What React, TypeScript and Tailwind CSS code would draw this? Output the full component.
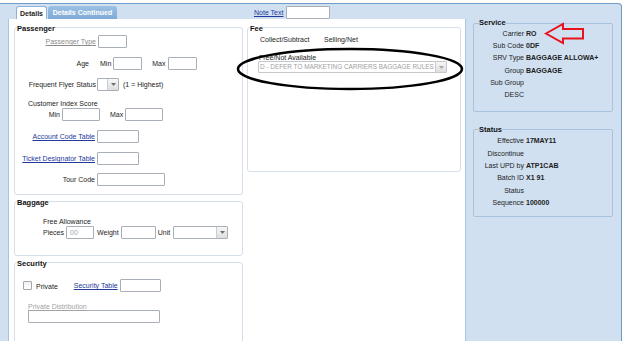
import type { ReactNode } from 'react';

// small form pieces used across the panels
function Input({ className = '', value }: { className?: string; value?: string }) {
  return (
    <div
      className={`flex h-[13px] shrink-0 items-center rounded-[1px] border border-[#a9afb7] bg-white px-[3px] text-[#a8a8a8] ${className}`}
    >
      {value}
    </div>
  );
}

function Combo({ className = '', text, disabled }: { className?: string; text?: string; disabled?: boolean }) {
  return (
    <div
      className={`flex shrink-0 overflow-hidden rounded-[1px] border bg-white ${
        disabled ? 'h-[12px] border-[#c4c8cc]' : 'h-[13px] border-[#a9afb7]'
      } ${className}`}
    >
      <div className="flex min-w-0 flex-1 items-center overflow-hidden whitespace-nowrap pl-[1px] text-[6.4px] text-[#a0a0a0]">
        {text}
      </div>
      <div className="flex w-[11px] shrink-0 items-center justify-center border-l border-[#c9ccd0] bg-gradient-to-b from-[#f7f7f7] to-[#dedede]">
        <svg width="5" height="3" viewBox="0 0 5 3">
          <path d="M0 0h5L2.5 3z" fill={disabled ? '#a9a9a9' : '#707070'} />
        </svg>
      </div>
    </div>
  );
}

function Link({ children }: { children: ReactNode }) {
  return <span className="text-[#23399c] underline">{children}</span>;
}

function Legend({ children, className = '' }: { children: ReactNode; className?: string }) {
  return <legend className={`text-[7.5px] font-bold text-[#111] ${className}`}>{children}</legend>;
}

function InfoRow({ label, value }: { label: string; value?: string }) {
  return (
    <div className="flex h-[12.3px] items-center">
      <span className="w-[50px] text-right">{label}</span>
      {value && <span className="ml-[2px] font-bold">{value}</span>}
    </div>
  );
}

export default function App() {
  return (
    <div className="relative h-[341px] w-[624px] overflow-hidden bg-white font-['Liberation_Sans',Arial,sans-serif] text-[7px] leading-none text-[#1c1c1c]">
      <div className="mt-[3px] mr-[2px] flex h-[338px] rounded-tr-[4px] border-t border-r border-[#6f9bc8] bg-[#d0e0f1]">
        {/* Left column: tabs + form */}
        <div className="flex w-[466px] flex-col">
          <div className="flex h-[18px] pl-[16px]">
            <div className="flex self-end">
              <div className="flex h-[13px] w-[31px] items-center justify-center rounded-t-[3px] border border-b-0 border-[#8fb3d8] bg-white font-bold">
                Details
              </div>
              <div className="ml-[1px] flex h-[13px] w-[69px] items-center justify-center rounded-t-[3px] bg-gradient-to-b from-[#9cc1e3] to-[#7eaad6] font-bold text-white">
                Details Continued
              </div>
            </div>
            <div className="ml-[137px] mt-[2px] flex h-[13px] items-center self-start">
              <Link>Note Text</Link>
              <Input className="ml-[3px] w-[44px]" />
            </div>
          </div>

          <div className="ml-[8px] flex flex-1 gap-[4px] border-x border-[#a7c4e2] bg-white pl-[5px]">
            <div className="flex w-[229px] flex-col">
              {/* Passenger */}
              <fieldset className="mt-[3px] rounded-[3px] border border-[#d6dfe9] pb-[8px]">
                <Legend className="ml-[2px] pt-[3px] leading-[8px]">Passenger</Legend>
                <div className="mt-[2px] flex h-[13px] items-center">
                  <span className="w-[81px] text-right text-[#8c8c8c] underline">Passenger Type</span>
                  <Input className="ml-[2px] w-[29px]" />
                </div>
                <div className="mt-[9px] flex h-[13px] items-center">
                  <span className="w-[74px] text-right">Age</span>
                  <span className="ml-[11px]">Min</span>
                  <Input className="ml-[2px] w-[29px]" />
                  <span className="ml-[10px]">Max</span>
                  <Input className="ml-[2px] w-[29px]" />
                </div>
                <div className="mt-[8px] flex h-[13px] items-center">
                  <span className="w-[81px] text-right">Frequent Flyer Status</span>
                  <Combo className="ml-[1px] w-[22px]" />
                  <span className="ml-[4px]">(1 = Highest)</span>
                </div>
                <div className="mt-[8px] flex h-[8px] items-center pl-[13px]">Customer Index Score</div>
                <div className="mt-[1px] flex h-[13px] items-center">
                  <span className="w-[45px] text-right">Min</span>
                  <Input className="ml-[2px] w-[38px]" />
                  <span className="ml-[10px]">Max</span>
                  <Input className="ml-[2px] w-[38px]" />
                </div>
                <div className="mt-[9px] flex h-[13px] items-center">
                  <span className="w-[80px] text-right">
                    <Link>Account Code Table</Link>
                  </span>
                  <Input className="ml-[2px] w-[42px]" />
                </div>
                <div className="mt-[9px] flex h-[13px] items-center">
                  <span className="w-[80px] text-right">
                    <Link>Ticket Designator Table</Link>
                  </span>
                  <Input className="ml-[2px] w-[42px]" />
                </div>
                <div className="mt-[8px] flex h-[13px] items-center">
                  <span className="w-[80px] text-right">Tour Code</span>
                  <Input className="ml-[2px] w-[68px]" />
                </div>
              </fieldset>

              {/* Baggage */}
              <fieldset className="mt-[1px] rounded-[3px] border border-[#d6dfe9] pb-[16px]">
                <Legend className="ml-[2px] pt-[3px] leading-[8px]">Baggage</Legend>
                <div className="mt-[10px] flex h-[8px] items-center pl-[28px]">Free Allowance</div>
                <div className="mt-[1px] flex h-[13px] items-center pl-[28px]">
                  <span>Pieces</span>
                  <Input className="ml-[2px] w-[28px]" value="00" />
                  <span className="ml-[3px]">Weight</span>
                  <Input className="ml-[2px] w-[35px]" />
                  <span className="ml-[2px]">Unit</span>
                  <Combo className="ml-[3px] w-[55px]" />
                </div>
              </fieldset>

              {/* Security */}
              <fieldset className="mt-[1px] rounded-[3px] border border-[#d6dfe9] pb-[40px]">
                <Legend className="ml-[2px] pt-[3px] leading-[8px]">Security</Legend>
                <div className="mt-[11px] flex h-[13px] items-center pl-[8px]">
                  <span className="h-[9px] w-[9px] rounded-[1px] border border-[#a3a8ae] bg-gradient-to-b from-[#f0f0f0] to-white" />
                  <span className="ml-[4px] mt-[2px]">Private</span>
                  <span className="ml-[16px]">
                    <Link>Security Table</Link>
                  </span>
                  <Input className="ml-[2px] w-[41px]" />
                </div>
                <div className="mt-[10px] flex h-[8px] items-center pl-[13px] text-[#a3a3a3] underline">Private Distribution</div>
                <Input className="ml-[13px] w-[132px]" />
              </fieldset>
            </div>

            {/* Fee */}
            <fieldset className="mt-[3px] w-[214px] self-start rounded-[3px] border border-[#d6dfe9] pb-[98px]">
              <Legend className="ml-[2px] pt-[3px] leading-[8px]">Fee</Legend>
              <div className="mt-[2px] flex h-[8px] items-center pl-[12px]">
                <span className="w-[64px]">Collect/Subtract</span>
                <span>Selling/Net</span>
              </div>
              <div className="mt-[10px] flex h-[8px] items-center pl-[11px]">Free/Not Available</div>
              <Combo disabled className="ml-[10px] w-[189px]" text="D - DEFER TO MARKETING CARRIERS BAGGAGE RULES" />
            </fieldset>
          </div>
        </div>

        {/* Right column: service / status */}
        <div className="flex-1 pl-[7px] pt-[15px]">
          <fieldset className="w-[140px] rounded-[2px] border border-[#a9c3df] pb-[10px]">
            <Legend className="ml-[5px] leading-[8px]">Service</Legend>
            <InfoRow label="Carrier" value="RO" />
            <InfoRow label="Sub Code" value="0DF" />
            <InfoRow label="SRV Type" value="BAGGAGE ALLOWA+" />
            <InfoRow label="Group" value="BAGGAGE" />
            <InfoRow label="Sub Group" />
            <InfoRow label="DESC" />
          </fieldset>
          <fieldset className="mt-[14px] w-[140px] rounded-[2px] border border-[#a9c3df] pb-[7px]">
            <Legend className="ml-[5px] leading-[8px]">Status</Legend>
            <div className="mt-[1px]">
              <InfoRow label="Effective" value="17MAY11" />
              <InfoRow label="Discontinue" />
              <InfoRow label="Last UPD by" value="ATP1CAB" />
              <InfoRow label="Batch ID" value="X1 91" />
              <InfoRow label="Status" />
              <InfoRow label="Sequence" value="100000" />
            </div>
          </fieldset>
        </div>
      </div>

      {/* hand-drawn annotations over the screenshot */}
      <svg className="pointer-events-none absolute left-0 top-0" width="624" height="341" viewBox="0 0 624 341">
        <ellipse cx="350" cy="69" rx="112" ry="20" fill="none" stroke="#000" strokeWidth="2.5" />
        <polygon
          points="546,33.5 563,24 563,29 583,29 583,38.5 563,38.5 563,43"
          fill="none"
          stroke="#e8141c"
          strokeWidth="2"
          strokeLinejoin="miter"
        />
      </svg>
    </div>
  );
}
